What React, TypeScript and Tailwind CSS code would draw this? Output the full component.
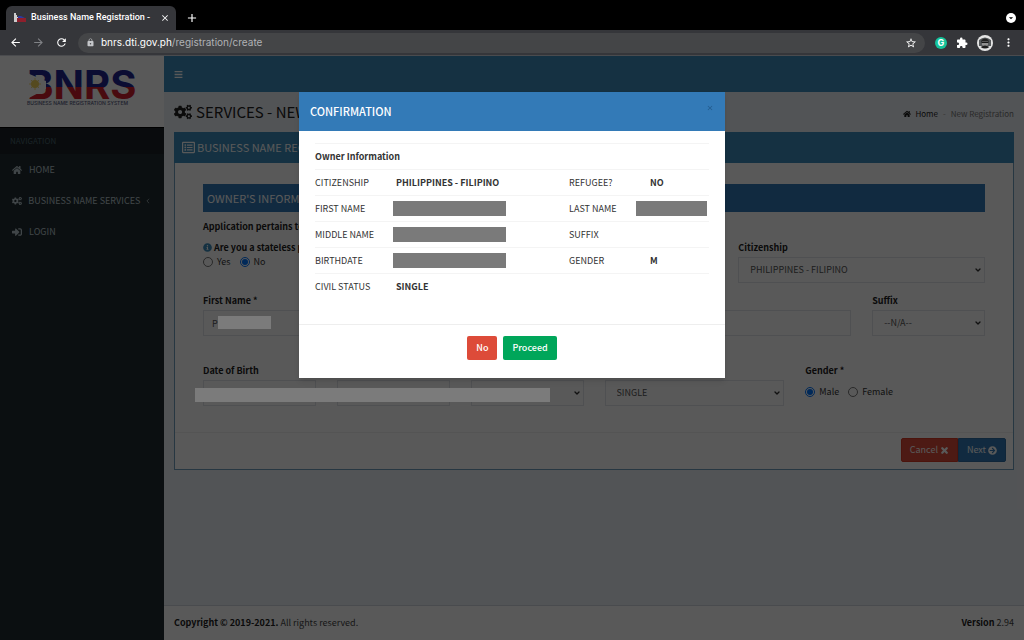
import type { ReactNode } from "react";
import { FaArrowCircleRight, FaBars, FaCogs, FaHome, FaInfoCircle, FaRegListAlt, FaSignInAlt } from "react-icons/fa";
import { MdAdd, MdArrowBack, MdArrowDropDown, MdArrowForward, MdClose, MdExtension, MdLock, MdMoreVert, MdRefresh, MdStarBorder } from "react-icons/md";
import { ChevronDown, ChevronLeft, X } from "lucide-react";
import clsx from "clsx";

const control = "block h-[26px] w-full appearance-none rounded-none border border-[#e3e5ea] bg-white text-[9px] leading-4 text-[#555]";

function BrowserBar() {
  return (
    <header className="font-['Inter','Liberation_Sans',sans-serif] text-white">
      <div className="flex h-[30px] items-end bg-black pl-[6px] pr-2">
        <div className="flex h-6 w-[170px] items-center rounded-t-md bg-[#35363a] pl-2 pr-[6px]">
          <Favicon />
          <span className="ml-[5px] flex-1 whitespace-nowrap font-['Roboto',sans-serif] text-[9px] font-medium">Business Name Registration -</span>
          <button aria-label="Close tab"><MdClose className="h-[10px] w-[10px]" /></button>
        </div>
        <button aria-label="New tab" className="ml-2 flex h-6 w-4 items-center justify-center"><MdAdd className="h-[14px] w-[14px]" /></button>
        <button aria-label="Search tabs" className="mb-[7px] ml-auto rounded-full bg-white text-black"><MdArrowDropDown className="h-[10px] w-[10px]" /></button>
      </div>
      <div className="flex h-[26px] items-center gap-[10px] border-b border-[#4a4b4e] bg-[#35363a] px-[9px]">
        <button aria-label="Back"><MdArrowBack className="h-[13px] w-[13px]" /></button>
        <button aria-label="Forward" className="text-[#808286]"><MdArrowForward className="h-[13px] w-[13px]" /></button>
        <button aria-label="Reload"><MdRefresh className="h-[13px] w-[13px]" /></button>
        <div className="flex h-5 flex-1 items-center rounded-full bg-[#444547] px-2">
          <MdLock className="h-[9px] w-[9px] text-[#c4c6c9]" />
          <span className="ml-[6px] flex-1 text-[10px] text-[#b0b2b5]"><span className="text-white">bnrs.dti.gov.ph</span>/registration/create</span>
          <button aria-label="Bookmark"><MdStarBorder className="h-3 w-3" /></button>
        </div>
        <div className="flex items-center gap-[9px]">
          <button aria-label="Grammar" className="flex h-3 w-3 items-center justify-center rounded-full bg-[#15c39a] text-[9px] font-bold leading-3">G</button>
          <button aria-label="Extensions"><MdExtension className="h-3 w-3" /></button>
          <button aria-label="Profile"><Avatar /></button>
          <button aria-label="Menu"><MdMoreVert className="h-[13px] w-[13px]" /></button>
        </div>
      </div>
    </header>
  );
}

function Favicon() {
  return (
    <svg viewBox="0 0 12 10" className="h-[10px] w-3">
      <path d="M0 0h2v2h1v2h1v5H0z" fill="#ccc" />
      <path d="M4 3h3l4 2H4z" fill="#2b3a9c" />
      <path d="M3 5h9v4H3z" fill="#8e1f2c" />
    </svg>
  );
}

function Avatar() {
  return (
    <svg viewBox="0 0 16 16" className="h-4 w-4">
      <circle cx="8" cy="8" r="8" fill="#e4e4e4" />
      <path d="M2 5q6-5 12 0v6H2z" fill="#55585a" />
      <path d="M4.5 5q3.5-3 7 0v2h-7z" fill="#222" />
      <path d="M5 6h6v4q-3 3.500-6 0z" fill="#909090" />
      <path d="M4.500 6.500h7v1.500h-7z" fill="#191919" />
      <path d="M3.500 12q4.500-3 9 0-4.500 3-9 0z" fill="#1c1c1c" />
    </svg>
  );
}

function Logo() {
  return (
    <div className="w-[110px]">
      <svg viewBox="0 0 110 32" className="h-8 w-[110px] overflow-visible" role="img" aria-label="BNRS">
        <defs>
          <linearGradient id="flag" x1="0" y1="0" x2="0" y2="1">
            <stop offset="0.55" stopColor="#22248f" />
            <stop offset="0.55" stopColor="#d01f2c" />
          </linearGradient>
        </defs>
        <text x="0" y="31" fontFamily="Inter, sans-serif" fontWeight="700" fontSize="40" fill="url(#flag)">BNRS</text>
        <path d="M0 5l19 8v8L0 31z" fill="#fff" />
        <circle cx="8" cy="16" r="4" fill="#f4d35a" />
        <path d="M8 10v12M2 16h12M4 12l8 8M12 12l-8 8" stroke="#f4d35a" strokeWidth="0.8" />
      </svg>
      <p className="whitespace-nowrap text-[5px] font-medium leading-[6px] text-[#555b80] font-['Inter',sans-serif]">BUSINESS NAME REGISTRATION SYSTEM</p>
    </div>
  );
}

function NavItem({ icon, label, arrow }: { icon: ReactNode; label: string; arrow?: boolean }) {
  return (
    <li>
      <a href="#" className="flex h-[31px] items-center whitespace-nowrap px-3 text-[9px] text-[#b8c7ce]">
        <span className="w-[17px] text-[10px]">{icon}</span>
        {label}
        {arrow && <ChevronLeft className="ml-1 h-2 w-2" />}
      </a>
    </li>
  );
}

function Sidebar() {
  return (
    <aside className="w-[164px] shrink-0 bg-[#222d32]">
      <div className="flex h-[72px] items-start justify-center border-b border-black bg-white pt-3">
        <Logo />
      </div>
      <h2 className="h-[26px] bg-[#1a2226] px-[10px] text-[8px] leading-[26px] text-[#4b646f]">NAVIGATION</h2>
      <ul>
        <NavItem icon={<FaHome />} label="HOME" />
        <NavItem icon={<FaCogs />} label="BUSINESS NAME SERVICES" arrow />
        <NavItem icon={<FaSignInAlt />} label="LOGIN" />
      </ul>
    </aside>
  );
}

function Field({ id, label, className, children }: { id: string; label: string; className: string; children: ReactNode }) {
  return (
    <div className={className}>
      <label htmlFor={id} className="block h-[18px] whitespace-nowrap text-[9px] font-bold leading-[18px]">{label}</label>
      {children}
    </div>
  );
}

function TextInput({ id, value }: { id: string; value?: string }) {
  return <input id={id} defaultValue={value} className={clsx(control, "px-2")} />;
}

function Select({ id, label, value }: { id: string; label?: string; value: string }) {
  return (
    <div className="relative">
      <select id={id} aria-label={label} defaultValue={value} className={clsx(control, "px-[11px]")}>
        <option>{value}</option>
      </select>
      <ChevronDown className="absolute right-[3px] top-[9px] h-2 w-2 text-[#333]" strokeWidth={4} />
    </div>
  );
}

function Radio({ name, label, checked }: { name: string; label: string; checked?: boolean }) {
  return (
    <label className="flex items-center gap-1">
      <input type="radio" name={name} defaultChecked={checked} className="h-[10px] w-[10px]" />
      {label}
    </label>
  );
}

function OwnerForm() {
  return (
    <form className="border border-[#6f9fbd] bg-white text-[9px] text-[#222]">
      <h2 className="-mx-px -mt-px flex h-[31px] items-center gap-[2px] whitespace-nowrap bg-[#3c8dbc] px-2 text-[11px] text-white">
        <FaRegListAlt className="h-[13px] w-[13px]" />
        BUSINESS NAME REGISTRATION
      </h2>
      <div className="px-7 pb-[26px] pt-[21px]">
        <h3 className="h-7 bg-[#337ab7] px-1 text-[11px] leading-7 text-white">OWNER'S INFORMATION</h3>
        <p className="mt-[7px] font-bold leading-4">Application pertains to the owner of the business</p>
        <div className="mt-1 grid grid-cols-12 gap-x-[21px]">
          <fieldset className="col-span-8">
            <legend className="flex h-4 items-center gap-[2px] whitespace-nowrap pt-px font-bold">
              <FaInfoCircle className="h-[9px] w-[9px] text-[#3c8dbc]" />
              Are you a stateless person or refugee?
            </legend>
            <div className="flex h-[14px] items-center gap-[9px] text-[#333]">
              <Radio name="refugee" label="Yes" />
              <Radio name="refugee" label="No" checked />
            </div>
          </fieldset>
          <Field id="citizenship" label="Citizenship" className="col-span-4">
            <Select id="citizenship" value="PHILIPPINES - FILIPINO" />
          </Field>
        </div>
        <div className="mt-[9px] grid grid-cols-12 gap-x-[21px]">
          <Field id="first" label="First Name *" className="col-span-4">
            <div className="relative">
              <TextInput id="first" value="P" />
              <span className="absolute left-[15px] top-[6px] z-20 h-[13px] w-[53px] bg-[#7b7b7b]" />
            </div>
          </Field>
          <Field id="middle" label="Middle Name" className="col-span-3"><TextInput id="middle" /></Field>
          <Field id="last" label="Last Name" className="col-span-3"><TextInput id="last" /></Field>
          <Field id="suffix" label="Suffix" className="col-span-2"><Select id="suffix" value="--N/A--" /></Field>
        </div>
        <div className="mt-[26px] grid grid-cols-12 gap-x-[21px]">
          <Field id="month" label="Date of Birth" className="col-span-6">
            <div className="relative grid grid-cols-3 gap-x-[21px]">
              <Select id="month" value="" />
              <Select id="day" label="Day" value="" />
              <Select id="year" label="Year" value="" />
              <span className="absolute -left-2 right-[34px] top-2 z-20 h-[14px] bg-[#7b7b7b]" />
            </div>
          </Field>
          <Field id="civil" label="Civil Status" className="col-span-3"><Select id="civil" value="SINGLE" /></Field>
          <fieldset className="col-span-3">
            <legend className="h-[18px] font-bold leading-[18px]">Gender *</legend>
            <div className="flex h-6 items-center gap-[9px] text-[#333]">
              <Radio name="gender" label="Male" checked />
              <Radio name="gender" label="Female" />
            </div>
          </fieldset>
        </div>
      </div>
      <div className="flex justify-end border-t border-[#f0f0f0] px-[7px] pb-[7px] pt-[5px] text-white">
        <button type="button" className="flex h-6 items-center gap-[2px] rounded-l-xs border border-[#d73925] bg-[#dd4b39] px-2">Cancel <X className="h-[9px] w-[9px]" strokeWidth={6} /></button>
        <button type="button" className="flex h-6 items-center gap-[2px] rounded-r-xs border border-[#2e6da4] bg-[#337ab7] px-2">Next <FaArrowCircleRight className="h-[9px] w-[9px]" /></button>
      </div>
    </form>
  );
}

type Row = [string, ReactNode, string?, ReactNode?];

const hidden = <span className="-ml-[3px] block h-[15px] w-[113px] bg-[#7a7a7a]" />;

const rows: Row[] = [
  ["CITIZENSHIP", "PHILIPPINES - FILIPINO", "REFUGEE?", "NO"],
  ["FIRST NAME", hidden, "LAST NAME", <span className="-ml-[14px] block h-[15px] w-[71px] bg-[#7a7a7a]" />],
  ["MIDDLE NAME", hidden, "SUFFIX", ""],
  ["BIRTHDATE", hidden, "GENDER", "M"],
  ["CIVIL STATUS", "SINGLE"],
];

function ConfirmDialog() {
  return (
    <div className="absolute inset-0 z-10 flex items-start justify-center bg-black/65 pt-9">
      <section role="dialog" aria-labelledby="confirm-title" className="w-[426px] max-w-full bg-white text-[9px] text-[#333] shadow-md">
        <div className="flex h-[39px] items-center justify-between bg-[#337ab7] px-[11px] text-white">
          <h2 id="confirm-title" className="text-[11px] font-medium">CONFIRMATION</h2>
          <button aria-label="Close" className="mb-2 text-[#235b8c]"><MdClose className="h-2 w-2" /></button>
        </div>
        <div className="px-4 pb-6 pt-3">
          <table className="w-full table-fixed text-left">
            <colgroup>
              <col className="w-[81px]" />
              <col className="w-[173px]" />
              <col className="w-[81px]" />
              <col />
            </colgroup>
            <thead>
              <tr className="h-[26px] border-t border-[#f4f4f4]">
                <th colSpan={4} className="font-bold">Owner Information</th>
              </tr>
            </thead>
            <tbody>
              {rows.map(([label, value, label2, value2]) => (
                <tr key={label} className="h-[26px] border-t border-[#f4f4f4]">
                  <td>{label}</td>
                  <td className="font-bold">{value}</td>
                  <td>{label2}</td>
                  <td className="font-bold">{value2}</td>
                </tr>
              ))}
            </tbody>
          </table>
        </div>
        <div className="flex justify-center gap-[6px] border-t border-[#eee] pb-[18px] pt-[11px] font-medium text-white">
          <button className="h-6 rounded-xs bg-[#dd4b39] px-[9px]">No</button>
          <button className="h-6 rounded-xs bg-[#00a65a] px-[9px]">Proceed</button>
        </div>
      </section>
    </div>
  );
}

export default function App() {
  return (
    <div className="flex min-h-screen flex-col">
      <BrowserBar />
      <div className="relative flex flex-1 font-['Noto_Sans_CJK_SC','Open_Sans',sans-serif]">
        <Sidebar />
        <div className="flex min-w-0 flex-1 flex-col bg-[#ecf0f5]">
          <nav className="flex h-9 items-center bg-[#3c8dbc] px-[10px] text-white">
            <button aria-label="Toggle navigation"><FaBars className="h-[9px] w-[9px]" /></button>
          </nav>
          <main className="flex-1 px-[10px]">
            <div className="flex h-10 items-center justify-between text-[#222]">
              <h1 className="flex items-center gap-1 whitespace-nowrap text-[15px]"><FaCogs className="h-[18px] w-[18px]" />SERVICES - NEW REGISTRATION</h1>
              <ol className="flex items-center gap-[5px] pt-1 text-[8px]">
                <li><a href="#" className="flex items-center gap-1"><FaHome className="h-2 w-2" />Home</a></li>
                <li className="text-[#999]">-</li>
                <li className="text-[#777]">New Registration</li>
              </ol>
            </div>
            <OwnerForm />
          </main>
          <footer className="flex h-[35px] items-center justify-between border-t border-[#d2d6de] bg-white px-[10px] text-[9px] text-[#444]">
            <p><strong className="text-[#222]">Copyright © 2019-2021.</strong> All rights reserved.</p>
            <p><strong className="text-[#222]">Version</strong> 2.94</p>
          </footer>
        </div>
        <ConfirmDialog />
      </div>
    </div>
  );
}
